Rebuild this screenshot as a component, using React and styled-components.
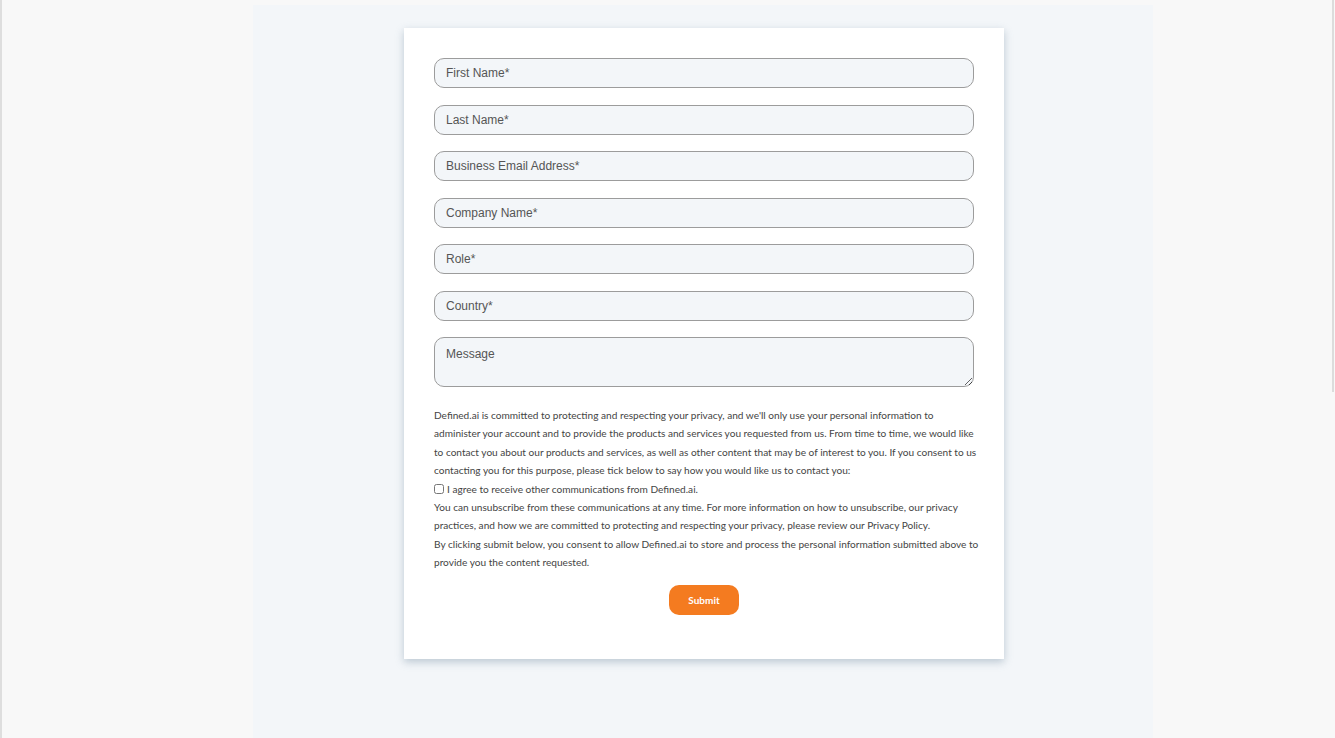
import React from "react";
import styled, { createGlobalStyle } from "styled-components";

const GlobalStyle = createGlobalStyle`
    html, body {
        margin: 0;
        padding: 0;
        height: 100%;
        background: #f8f8f8;
        overflow: hidden;
    }
    #root {
        height: 100%;
    }
`;

const Page = styled.div`
    height: 738px;
    border-left: 2px solid #dedede;
    box-sizing: border-box;
    padding-top: 5px;
    padding-left: 251px;
`;

const Panel = styled.div`
    width: 900px;
    height: 733px;
    background: #f3f6f9;
    padding-top: 23px;
    box-sizing: border-box;
`;

const Card = styled.form`
    width: 600px;
    height: 631px;
    margin-left: 151px;
    background: #fff;
    box-shadow: 0 3px 8px rgba(120, 145, 165, 0.45);
    box-sizing: border-box;
    padding: 30px 30px 0;
`;

const Field = styled.input`
    display: block;
    width: 540px;
    height: 30px;
    box-sizing: border-box;
    margin: 0 0 16.5px;
    padding: 0 11px;
    border: 1px solid #9c9c9c;
    border-radius: 10px;
    background: #f3f6f9;
    font-family: "Liberation Sans", Arial, sans-serif;
    font-size: 12px;
    color: #333;
    outline: none;

    &::placeholder {
        color: #555;
    }
`;

const Message = styled.textarea`
    display: block;
    width: 540px;
    height: 50px;
    box-sizing: border-box;
    margin: 0 0 19px;
    padding: 9px 11px;
    border: 1px solid #9c9c9c;
    border-radius: 10px;
    background: #f3f6f9;
    font-family: "Liberation Sans", Arial, sans-serif;
    font-size: 12px;
    color: #333;
    resize: vertical;
    outline: none;

    &::placeholder {
        color: #555;
    }
`;

const Legal = styled.div`
    margin-right: -5px;
    font-family: "Lato", "Open Sans", sans-serif;
    font-size: 10.1px;
    line-height: 18.4px;
    color: #444;

    > p {
        margin: 0;
    }
`;

const CheckRow = styled.label`
    display: flex;
    align-items: center;
    gap: 3px;

    > input {
        width: 10px;
        height: 10px;
        margin: 0;
    }
`;

const Actions = styled.div`
    display: flex;
    justify-content: center;
    padding-top: 13px;
`;

const Submit = styled.button`
    width: 70px;
    height: 30px;
    border: none;
    border-radius: 10px;
    background: #f47b20;
    color: #fff;
    font-family: "Lato", "Open Sans", sans-serif;
    font-weight: 700;
    font-size: 10px;
    cursor: pointer;
`;

const ScrollTrack = styled.div`
    position: fixed;
    top: 0;
    right: 1px;
    width: 2px;
    height: 392px;
    background: #dcdcdc;
`;

const fields = [
    "First Name*",
    "Last Name*",
    "Business Email Address*",
    "Company Name*",
    "Role*",
    "Country*",
];

function App() {
    return (
        <>
            <GlobalStyle />
            <Page>
                <Panel>
                    <Card onSubmit={e => e.preventDefault()}>
                        {fields.map(f => (
                            <Field key={f} placeholder={f} />
                        ))}
                        <Message placeholder="Message" />

                        <Legal>
                            <p>
                                Defined.ai is committed to protecting and respecting your privacy, and we'll only use your personal information to administer your account and to provide the products and services you requested from us. From time to time, we would like to contact you about our products and services, as well as other content that may be of interest to you. If you consent to us contacting you for this purpose, please tick below to say how you would like us to contact you:
                            </p>
                            <CheckRow>
                                <input type="checkbox" />
                                I agree to receive other communications from Defined.ai.
                            </CheckRow>
                            <p>
                                You can unsubscribe from these communications at any time. For more information on how to unsubscribe, our privacy practices, and how we are committed to protecting and respecting your privacy, please review our Privacy Policy.
                            </p>
                            <p>
                                By clicking submit below, you consent to allow Defined.ai to store and process the personal information submitted above to provide you the content requested.
                            </p>
                        </Legal>

                        <Actions>
                            <Submit type="submit">Submit</Submit>
                        </Actions>
                    </Card>
                </Panel>
            </Page>
            <ScrollTrack />
        </>
    );
}

export default App;
